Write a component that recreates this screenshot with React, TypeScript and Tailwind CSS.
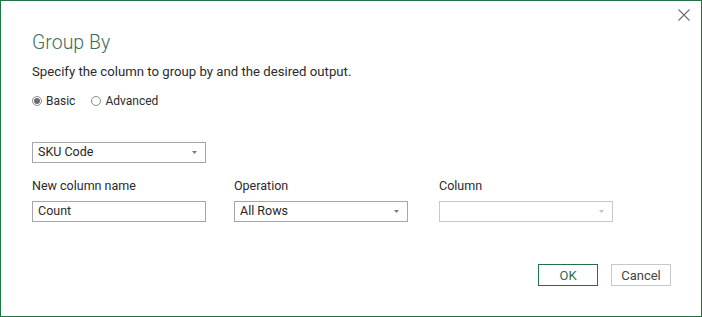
const font = { fontFamily: 'Roboto, "Noto Sans", sans-serif' };

function Caret({ light }: { light?: boolean }) {
  return (
    <svg width="5" height="3" viewBox="0 0 5 3" className="shrink-0">
      <path d="M0 0 H5 L2.5 3 Z" fill={light ? "#c0c0c0" : "#7a7a7a"} />
    </svg>
  );
}

function Select({ value, disabled }: { value?: string; disabled?: boolean }) {
  return (
    <div
      className={`w-[174px] h-[21px] border bg-white flex items-center justify-between pl-[5px] pr-[8px] text-[12.5px] text-[#262626] ${
        disabled ? "border-[#c8c8c8]" : "border-[#a6a6a6]"
      }`}
    >
      <span className="leading-none">{value}</span>
      <Caret light={disabled} />
    </div>
  );
}

function Radio({ checked, label }: { checked?: boolean; label: string }) {
  return (
    <label className="flex items-center gap-[4px]">
      <span className="w-[10px] h-[10px] rounded-full border border-[#8a8a8a] bg-white flex items-center justify-center">
        {checked && <span className="w-[6px] h-[6px] rounded-full bg-[#6b6b6b]" />}
      </span>
      <span>{label}</span>
    </label>
  );
}

export default function App() {
  return (
    <div
      className="w-[702px] h-[317px] bg-white border border-[#217346] relative flex flex-col pl-[31px] pr-[30px] pt-[28px] text-[#2b2b2b]"
      style={font}
    >
      <button className="absolute right-[10px] top-[7px] w-[14px] h-[14px] flex items-center justify-center">
        <svg width="12" height="12" viewBox="0 0 12 12">
          <path d="M0.5 0.5 L11.5 11.5 M11.5 0.5 L0.5 11.5" stroke="#6e6e6e" strokeWidth="1.1" />
        </svg>
      </button>

      <h1 className="text-[19.5px] leading-[28px] text-[#3a6f5e] font-light">Group By</h1>
      <p className="mt-[6px] text-[13.2px] leading-[18px]">
        Specify the column to group by and the desired output.
      </p>

      <div className="mt-[12px] flex items-center gap-[16px] text-[12px] leading-[16px]">
        <Radio checked label="Basic" />
        <Radio label="Advanced" />
      </div>

      <div className="mt-[33px]">
        <Select value="SKU Code" />
      </div>

      <div className="mt-[14px] flex text-[12.5px]">
        <div className="w-[174px] flex flex-col gap-[6px]">
          <span className="leading-[18px]">New column name</span>
          <div className="h-[21px] border border-[#a6a6a6] flex items-center pl-[5px]">Count</div>
        </div>
        <div className="ml-[28px] w-[175px] flex flex-col gap-[6px]">
          <span className="leading-[18px]">Operation</span>
          <Select value="All Rows" />
        </div>
        <div className="ml-[30px] w-[174px] flex flex-col gap-[6px]">
          <span className="leading-[18px]">Column</span>
          <Select disabled />
        </div>
      </div>

      <div className="mt-auto mb-[30px] flex justify-end gap-[13px] text-[13px]">
        <button className="w-[60px] h-[22px] border border-[#217346] text-[#2f6d57] leading-none">OK</button>
        <button className="w-[60px] h-[22px] border border-[#c8c8c8] text-[#444] leading-none">Cancel</button>
      </div>
    </div>
  );
}
